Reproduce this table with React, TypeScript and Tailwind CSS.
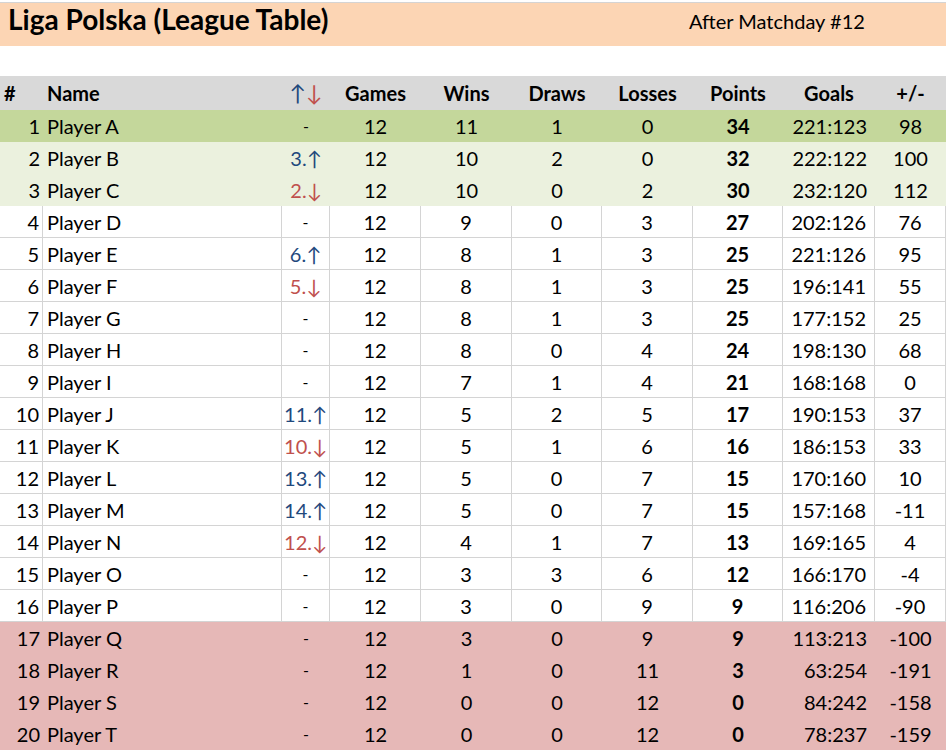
import React from "react";

type Row = {
  pos: number;
  name: string;
  move: string;
  dir: "up" | "down" | "none";
  g: number;
  w: number;
  d: number;
  l: number;
  p: number;
  goals: string;
  diff: string;
};

const data: [string, "up" | "down" | "none", number, number, number, number, string, string][] = [
  ["-", "none", 11, 1, 0, 34, "221:123", "98"],
  ["3.", "up", 10, 2, 0, 32, "222:122", "100"],
  ["2.", "down", 10, 0, 2, 30, "232:120", "112"],
  ["-", "none", 9, 0, 3, 27, "202:126", "76"],
  ["6.", "up", 8, 1, 3, 25, "221:126", "95"],
  ["5.", "down", 8, 1, 3, 25, "196:141", "55"],
  ["-", "none", 8, 1, 3, 25, "177:152", "25"],
  ["-", "none", 8, 0, 4, 24, "198:130", "68"],
  ["-", "none", 7, 1, 4, 21, "168:168", "0"],
  ["11.", "up", 5, 2, 5, 17, "190:153", "37"],
  ["10.", "down", 5, 1, 6, 16, "186:153", "33"],
  ["13.", "up", 5, 0, 7, 15, "170:160", "10"],
  ["14.", "up", 5, 0, 7, 15, "157:168", "-11"],
  ["12.", "down", 4, 1, 7, 13, "169:165", "4"],
  ["-", "none", 3, 3, 6, 12, "166:170", "-4"],
  ["-", "none", 3, 0, 9, 9, "116:206", "-90"],
  ["-", "none", 3, 0, 9, 9, "113:213", "-100"],
  ["-", "none", 1, 0, 11, 3, "63:254", "-191"],
  ["-", "none", 0, 0, 12, 0, "84:242", "-158"],
  ["-", "none", 0, 0, 12, 0, "78:237", "-159"],
];

const rows: Row[] = data.map((r, i) => ({
  pos: i + 1,
  name: `Player ${String.fromCharCode(65 + i)}`,
  move: r[0],
  dir: r[1],
  g: 12,
  w: r[2],
  d: r[3],
  l: r[4],
  p: r[5],
  goals: r[6],
  diff: r[7],
}));

const cols = "grid grid-cols-[43px_239px_48px_91px_91px_90px_91px_90px_92px_71px]";

function rowBg(pos: number) {
  if (pos === 1) return "bg-[#c4d79b]";
  if (pos <= 3) return "bg-[#ebf1de]";
  if (pos >= 17) return "bg-[#e6b8b7]";
  return "bg-white";
}

export default function App() {
  return (
    <div
      className="w-[946px] h-[751px] overflow-hidden bg-white text-[20px] text-black leading-none"
      style={{ fontFamily: "Lato, 'Liberation Sans', sans-serif" }}
    >
      <div className="h-[3px] border-b border-[#d4d4d4] bg-white" />
      <div className="h-[43px] bg-[#fcd5b4] flex items-start">
        <div className="pl-[8px] pt-[2px] text-[28px] font-bold w-[689px]">
          Liga Polska (League Table)
        </div>
        <div className="pt-[8px] text-[20px]">After Matchday #12</div>
      </div>
      <div className="h-[30px] bg-white" />
      <div className={`${cols} h-[34px] bg-[#d9d9d9] font-bold items-center`}>
        <div className="pl-[4px]">#</div>
        <div className="pl-[4px]">Name</div>
        <div className="flex justify-center text-[22px] font-normal">
          <span className="text-[#1f497d]">↑</span>
          <span className="text-[#c0504d]">↓</span>
        </div>
        <div className="text-center">Games</div>
        <div className="text-center">Wins</div>
        <div className="text-center">Draws</div>
        <div className="text-center">Losses</div>
        <div className="text-center">Points</div>
        <div className="text-center">Goals</div>
        <div className="text-center">+/-</div>
      </div>
      {rows.map((r) => {
        const white = r.pos >= 4 && r.pos <= 16;
        const cell = white ? "border-r border-b border-[#d4d4d4]" : "";
        const moveColor =
          r.dir === "up" ? "text-[#1f497d]" : r.dir === "down" ? "text-[#c0504d]" : "text-black";
        return (
          <div key={r.pos} className={`${cols} h-[32px] ${rowBg(r.pos)}`}>
            <div className={`${cell} flex items-center justify-end pr-[3px]`}>{r.pos}</div>
            <div className={`${cell} flex items-center pl-[4px]`}>{r.name}</div>
            <div className={`${cell} flex items-center justify-center ${moveColor}`}>
              {r.dir === "none" ? (
                <span className="text-[16px]">-</span>
              ) : (
                <span>
                  {r.move}
                  {r.dir === "up" ? "↑" : "↓"}
                </span>
              )}
            </div>
            <div className={`${cell} flex items-center justify-center`}>{r.g}</div>
            <div className={`${cell} flex items-center justify-center`}>{r.w}</div>
            <div className={`${cell} flex items-center justify-center`}>{r.d}</div>
            <div className={`${cell} flex items-center justify-center`}>{r.l}</div>
            <div className={`${cell} flex items-center justify-center font-bold`}>{r.p}</div>
            <div className={`${cell} flex items-center justify-end pr-[8px]`}>{r.goals}</div>
            <div className={`${cell} flex items-center justify-center`}>{r.diff}</div>
          </div>
        );
      })}
    </div>
  );
}
